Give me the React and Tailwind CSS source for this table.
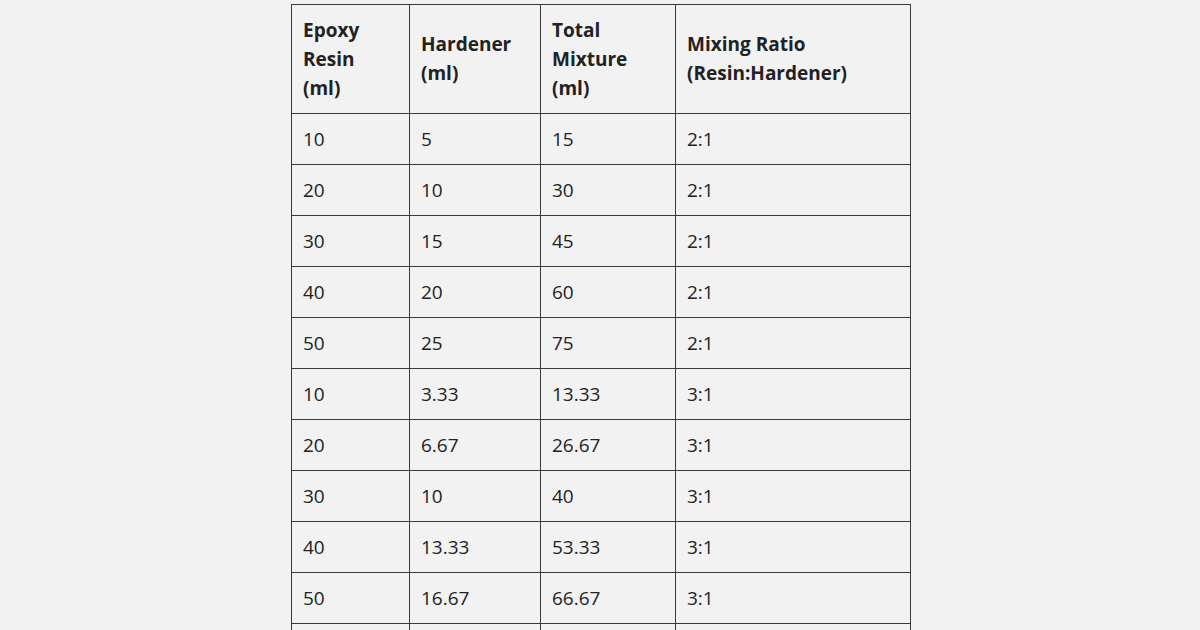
import React from 'react';

const rows = [
  ['10', '5', '15', '2:1'],
  ['20', '10', '30', '2:1'],
  ['30', '15', '45', '2:1'],
  ['40', '20', '60', '2:1'],
  ['50', '25', '75', '2:1'],
  ['10', '3.33', '13.33', '3:1'],
  ['20', '6.67', '26.67', '3:1'],
  ['30', '10', '40', '3:1'],
  ['40', '13.33', '53.33', '3:1'],
  ['50', '16.67', '66.67', '3:1'],
  ['', '', '', ''],
];

const headers = [
  ['Epoxy', 'Resin', '(ml)'],
  ['Hardener', '(ml)'],
  ['Total', 'Mixture', '(ml)'],
  ['Mixing Ratio', '(Resin:Hardener)'],
];

export default function App() {
  return (
    <div className="w-[1200px] h-[630px] overflow-hidden bg-[#f2f2f2] pt-[4px] text-[#222] font-['Open_Sans','Noto_Sans',sans-serif]">
      <table className="ml-[291px] border-collapse table-fixed w-[619px] text-[19px] leading-[29px]">
        <colgroup>
          <col className="w-[118px]" />
          <col className="w-[131px]" />
          <col className="w-[135px]" />
          <col className="w-[235px]" />
        </colgroup>
        <thead>
          <tr className="h-[109px]">
            {headers.map((h, i) => (
              <th key={i} className="border border-[#3a3a3a] px-[11px] py-[10px] text-left align-middle font-bold whitespace-nowrap">
                {h.map((line, k) => (
                  <div key={k}>{line}</div>
                ))}
              </th>
            ))}
          </tr>
        </thead>
        <tbody>
          {rows.map((r, i) => (
            <tr key={i} className="h-[51px]">
              {r.map((c, j) => (
                <td key={j} className="border border-[#3a3a3a] px-[11px] py-[10px] align-middle">{c}</td>
              ))}
            </tr>
          ))}
        </tbody>
      </table>
    </div>
  );
}
